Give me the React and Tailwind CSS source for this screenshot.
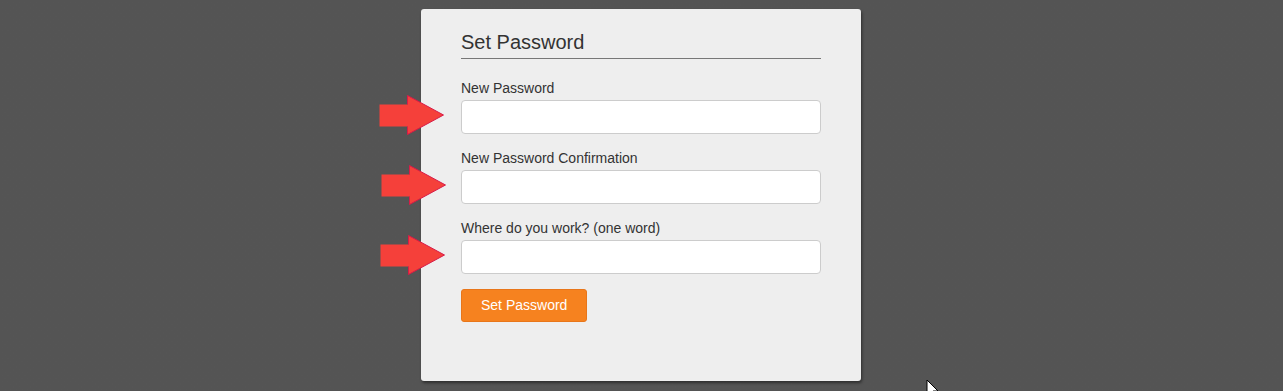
export default function App() {
  const fields = [
    { label: "New Password", type: "password" },
    { label: "New Password Confirmation", type: "password" },
    { label: "Where do you work? (one word)", type: "text" },
  ]

  return (
    <div
      className="relative flex min-h-screen justify-center overflow-hidden bg-[#555555] bg-[repeating-linear-gradient(45deg,#575757_0,#575757_1px,#545454_1px,#545454_4px),repeating-linear-gradient(-45deg,#575757_0,#575757_1px,#545454_1px,#545454_4px)] bg-blend-darken pr-px pt-[9px]"
      style={{ fontFamily: '"Liberation Sans", Arial, sans-serif' }}
    >
      <div className="relative flex h-[372px] w-[440px] flex-col rounded-[3px] bg-[#eeeeee] px-10 pt-[22px] shadow-[1px_2px_3px_rgba(0,0,0,0.45)]">
        <h2 className="border-b border-[#777777] pb-[5px] text-[20px] leading-[22px] text-[#333333]">
          Set Password
        </h2>

        <form
          className="mt-[19px] flex flex-col gap-[14px]"
          onSubmit={(e) => e.preventDefault()}
        >
          {fields.map((f, i) => (
            <div key={i} className="flex flex-col gap-[2px]">
              <label className="text-[14px] leading-5 text-[#333333]">
                {f.label}
              </label>
              <input
                type={f.type}
                className="h-[34px] w-full rounded-[4px] border border-[#cccccc] bg-white px-3 text-[14px] outline-none"
              />
            </div>
          ))}

          <button
            type="submit"
            className="mt-[1px] h-[33px] self-start rounded-[3px] border border-[#e8761a] bg-[#f6821f] px-[19px] text-[14px] text-white"
          >
            Set Password
          </button>
        </form>

        {/* red arrows pointing at the inputs */}
        <Arrow className="absolute left-[-42px] top-[86px]" />
        <Arrow className="absolute left-[-40px] top-[156px]" />
        <Arrow className="absolute left-[-41px] top-[226px]" />
      </div>

      {/* mouse cursor */}
      <svg
        className="absolute left-[926px] top-[379px]"
        width="14"
        height="20"
        viewBox="0 0 14 20"
      >
        <path d="M1 1 L1 17 L5 13 L8 19 L10 18 L7 12 L12 12 Z" fill="#ffffff" stroke="#000000" strokeWidth="1" />
      </svg>
    </div>
  )
}

function Arrow({ className }) {
  return (
    <svg className={className} width="66" height="41" viewBox="0 0 66 41">
      <polygon
        points="0.5,9.5 28.5,9.5 28.5,0.5 64.5,20 28.5,39.5 28.5,31.5 0.5,31.5"
        fill="#f5403a"
      />
      <polyline
        points="28.5,9.5 28.5,0.5 64.5,20 28.5,39.5 28.5,31.5"
        fill="none"
        stroke="#d81b48"
        strokeWidth="1"
      />
    </svg>
  )
}
